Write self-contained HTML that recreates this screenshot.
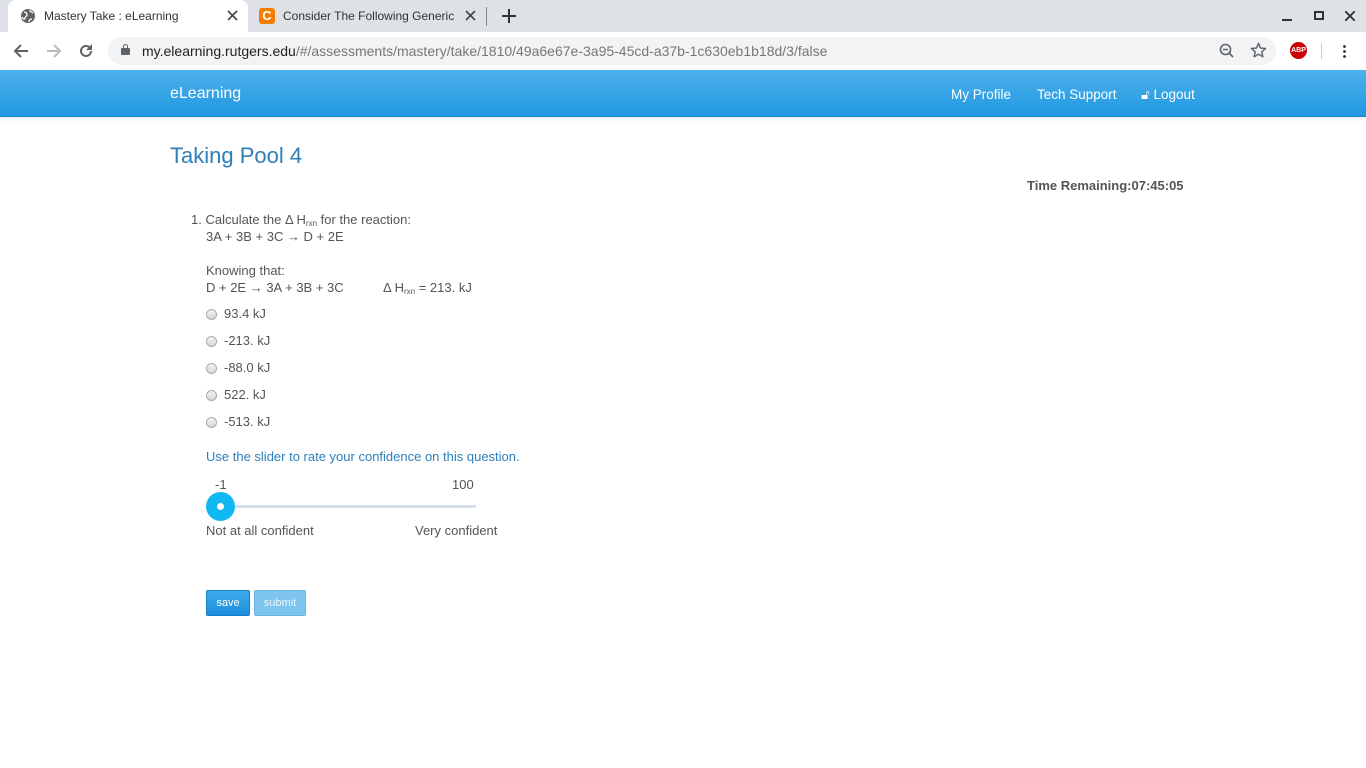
<!DOCTYPE html>
<html><head><meta charset="utf-8"><style>
*{margin:0;padding:0;box-sizing:border-box}
body{width:1366px;height:768px;overflow:hidden;background:#fff;font-family:"Liberation Sans",sans-serif;color:#555;position:relative}
.a{position:absolute;white-space:nowrap}
.tabs{position:absolute;left:0;top:0;width:1366px;height:32px;background:#dee1e6}
.tab{position:absolute;left:8px;top:0;width:240px;height:32px;background:#fff;border-radius:8px 8px 0 0}
.tb{position:absolute;left:0;top:32px;width:1366px;height:38px;background:#fff}
.url{position:absolute;left:108px;top:37px;width:1168px;height:28px;background:#f1f3f4;border-radius:14px}
.nav{position:absolute;left:0;top:70px;width:1366px;height:47px;background:linear-gradient(#4db1eb,#2098e1);border-bottom:1px solid #1a86c8;box-shadow:0 2px 4px rgba(0,0,0,.08)}
.nav span{position:absolute;top:17px;color:#fff;font-size:13.5px}
.q{font-size:13px;color:#555}
.r{position:absolute;left:206px;width:11px;height:11px;border-radius:50%;border:1px solid #aaa;background:linear-gradient(#f4f4f4,#d6d6d6)}
sub{font-size:8px;vertical-align:-2px}
</style></head><body>
<div class="tabs"></div>
<div class="tab"></div>
<svg class="a" style="left:20px;top:8px" width="16" height="16" viewBox="0 0 16 16"><circle cx="8" cy="8" r="7" fill="#5f6368"/><path d="M4 4c2 0 3 1 3 3s-2 1-2 3-2 1-3-1M10 2c0 2 2 2 3 3M9 14c0-2 1-3 3-3" stroke="#fff" stroke-width="1.3" fill="none"/></svg>
<div class="a" style="left:44px;top:9px;font-size:12px;color:#333">Mastery Take : eLearning</div>
<svg class="a" style="left:227px;top:10px" width="11" height="11"><path d="M1 1l9 9M10 1l-9 9" stroke="#444" stroke-width="1.6"/></svg>
<div class="a" style="left:259px;top:8px;width:16px;height:16px;background:#f57c00;border-radius:3px;color:#fff;font-weight:bold;font-size:13px;text-align:center;line-height:16px">C</div>
<div class="a" style="left:283px;top:9px;font-size:12px;color:#333;width:172px;overflow:hidden">Consider The Following Generic</div>
<svg class="a" style="left:465px;top:10px" width="11" height="11"><path d="M1 1l9 9M10 1l-9 9" stroke="#444" stroke-width="1.6"/></svg>
<div class="a" style="left:486px;top:7px;width:1px;height:19px;background:#888"></div>
<svg class="a" style="left:502px;top:9px" width="14" height="14"><path d="M7 0v14M0 7h14" stroke="#333" stroke-width="2"/></svg>
<div class="a" style="left:1282px;top:19px;width:10px;height:2px;background:#333"></div>
<div class="a" style="left:1314px;top:11px;width:10px;height:9px;border:2px solid #333"></div>
<svg class="a" style="left:1345px;top:11px" width="10" height="10"><path d="M0 0l10 10M10 0l-10 10" stroke="#333" stroke-width="1.8"/></svg>
<div class="tb"></div>
<svg class="a" style="left:13px;top:43px" width="16" height="16"><path d="M15 8H2M8 2L2 8l6 6" stroke="#5f6368" stroke-width="2" fill="none"/></svg>
<svg class="a" style="left:46px;top:43px" width="16" height="16"><path d="M1 8h13M8 2l6 6-6 6" stroke="#bbb" stroke-width="2" fill="none"/></svg>
<svg class="a" style="left:78px;top:43px" width="16" height="16"><path d="M13 8a5 5 0 1 1-1.5-3.6" stroke="#5f6368" stroke-width="2" fill="none"/><path d="M14 1v6h-6z" fill="#5f6368"/></svg>
<div class="url"></div>
<div class="a" style="left:121px;top:44px;width:9px;height:11px"><div style="position:absolute;left:0;top:4px;width:9px;height:7px;background:#5f6368;border-radius:1px"></div><div style="position:absolute;left:2px;top:0;width:5px;height:6px;border:1.5px solid #5f6368;border-radius:3px 3px 0 0"></div></div>
<div class="a" style="left:142px;top:43px;font-size:14px;color:#222">my.elearning.rutgers.edu<span style="color:#777">/#/assessments/mastery/take/1810/49a6e67e-3a95-45cd-a37b-1c630eb1b18d/3/false</span></div>
<svg class="a" style="left:1219px;top:43px" width="16" height="16"><circle cx="6.5" cy="6.5" r="5" stroke="#5f6368" stroke-width="1.6" fill="none"/><path d="M4 6.5h5M10 10l4 4" stroke="#5f6368" stroke-width="1.6"/></svg>
<svg class="a" style="left:1250px;top:42px" width="17" height="17" viewBox="0 0 24 24"><path d="M12 2l2.9 6.6 7.1.6-5.4 4.7 1.6 7-6.2-3.7-6.2 3.7 1.6-7L2 9.2l7.1-.6z" stroke="#5f6368" stroke-width="2" fill="none" stroke-linejoin="round"/></svg>
<div class="a" style="left:1290px;top:42px;width:17px;height:17px;border-radius:50%;background:#c00;color:#fff;font-size:7px;font-weight:bold;text-align:center;line-height:17px">ABP</div>
<div class="a" style="left:1321px;top:43px;width:1px;height:16px;background:#ccc"></div>
<div class="a" style="left:1343px;top:44px;width:3px;height:14px;background:radial-gradient(circle,#444 1.3px,transparent 1.6px) 0 0/3px 5px"></div>
<div class="nav"><span style="left:170px;top:15px;font-size:16px">eLearning</span><span style="left:951px">My Profile</span><span style="left:1037px">Tech Support</span><span style="left:1141px">🔓︎ Logout</span></div>
<div class="a" style="left:170px;top:143px;font-size:22px;color:#2d7fb8">Taking Pool 4</div>
<div class="a" style="left:1027px;top:178px;font-size:13px;font-weight:bold;color:#555">Time Remaining:07:45:05</div>
<div class="a q" style="left:191px;top:212px">1. Calculate the Δ H<sub>rxn</sub> for the reaction:</div>
<div class="a q" style="left:206px;top:229px">3A + 3B + 3C → D + 2E</div>
<div class="a q" style="left:206px;top:263px">Knowing that:</div>
<div class="a q" style="left:206px;top:280px">D + 2E → 3A + 3B + 3C</div>
<div class="a q" style="left:383px;top:280px">Δ H<sub>rxn</sub> = 213. kJ</div>
<div class="r" style="top:309px"></div><div class="a q" style="left:224px;top:306px">93.4 kJ</div>
<div class="r" style="top:336px"></div><div class="a q" style="left:224px;top:333px">-213. kJ</div>
<div class="r" style="top:363px"></div><div class="a q" style="left:224px;top:360px">-88.0 kJ</div>
<div class="r" style="top:390px"></div><div class="a q" style="left:224px;top:387px">522. kJ</div>
<div class="r" style="top:417px"></div><div class="a q" style="left:224px;top:414px">-513. kJ</div>
<div class="a q" style="left:206px;top:449px;color:#2d7fb8">Use the slider to rate your confidence on this question.</div>
<div class="a q" style="left:215px;top:477px">-1</div>
<div class="a q" style="left:452px;top:477px">100</div>
<div class="a" style="left:220px;top:505px;width:256px;height:3px;background:#d6dfee"></div>
<div class="a" style="left:206px;top:492px;width:29px;height:29px;border-radius:50%;background:#12b8f2"></div>
<div class="a" style="left:217px;top:503px;width:7px;height:7px;border-radius:50%;background:#fff"></div>
<div class="a q" style="left:206px;top:523px">Not at all confident</div>
<div class="a q" style="left:415px;top:523px">Very confident</div>
<div class="a" style="left:206px;top:590px;width:44px;height:26px;background:linear-gradient(#3daaeb,#1b8fdc);border:1px solid #1a7fc4;border-radius:2px;color:#fff;font-size:11px;text-align:center;line-height:24px">save</div>
<div class="a" style="left:254px;top:590px;width:52px;height:26px;background:#7ec6f0;border:1px solid #6ab2e0;border-radius:2px;color:#e8f5fd;font-size:11px;text-align:center;line-height:24px">submit</div>
</body></html>
